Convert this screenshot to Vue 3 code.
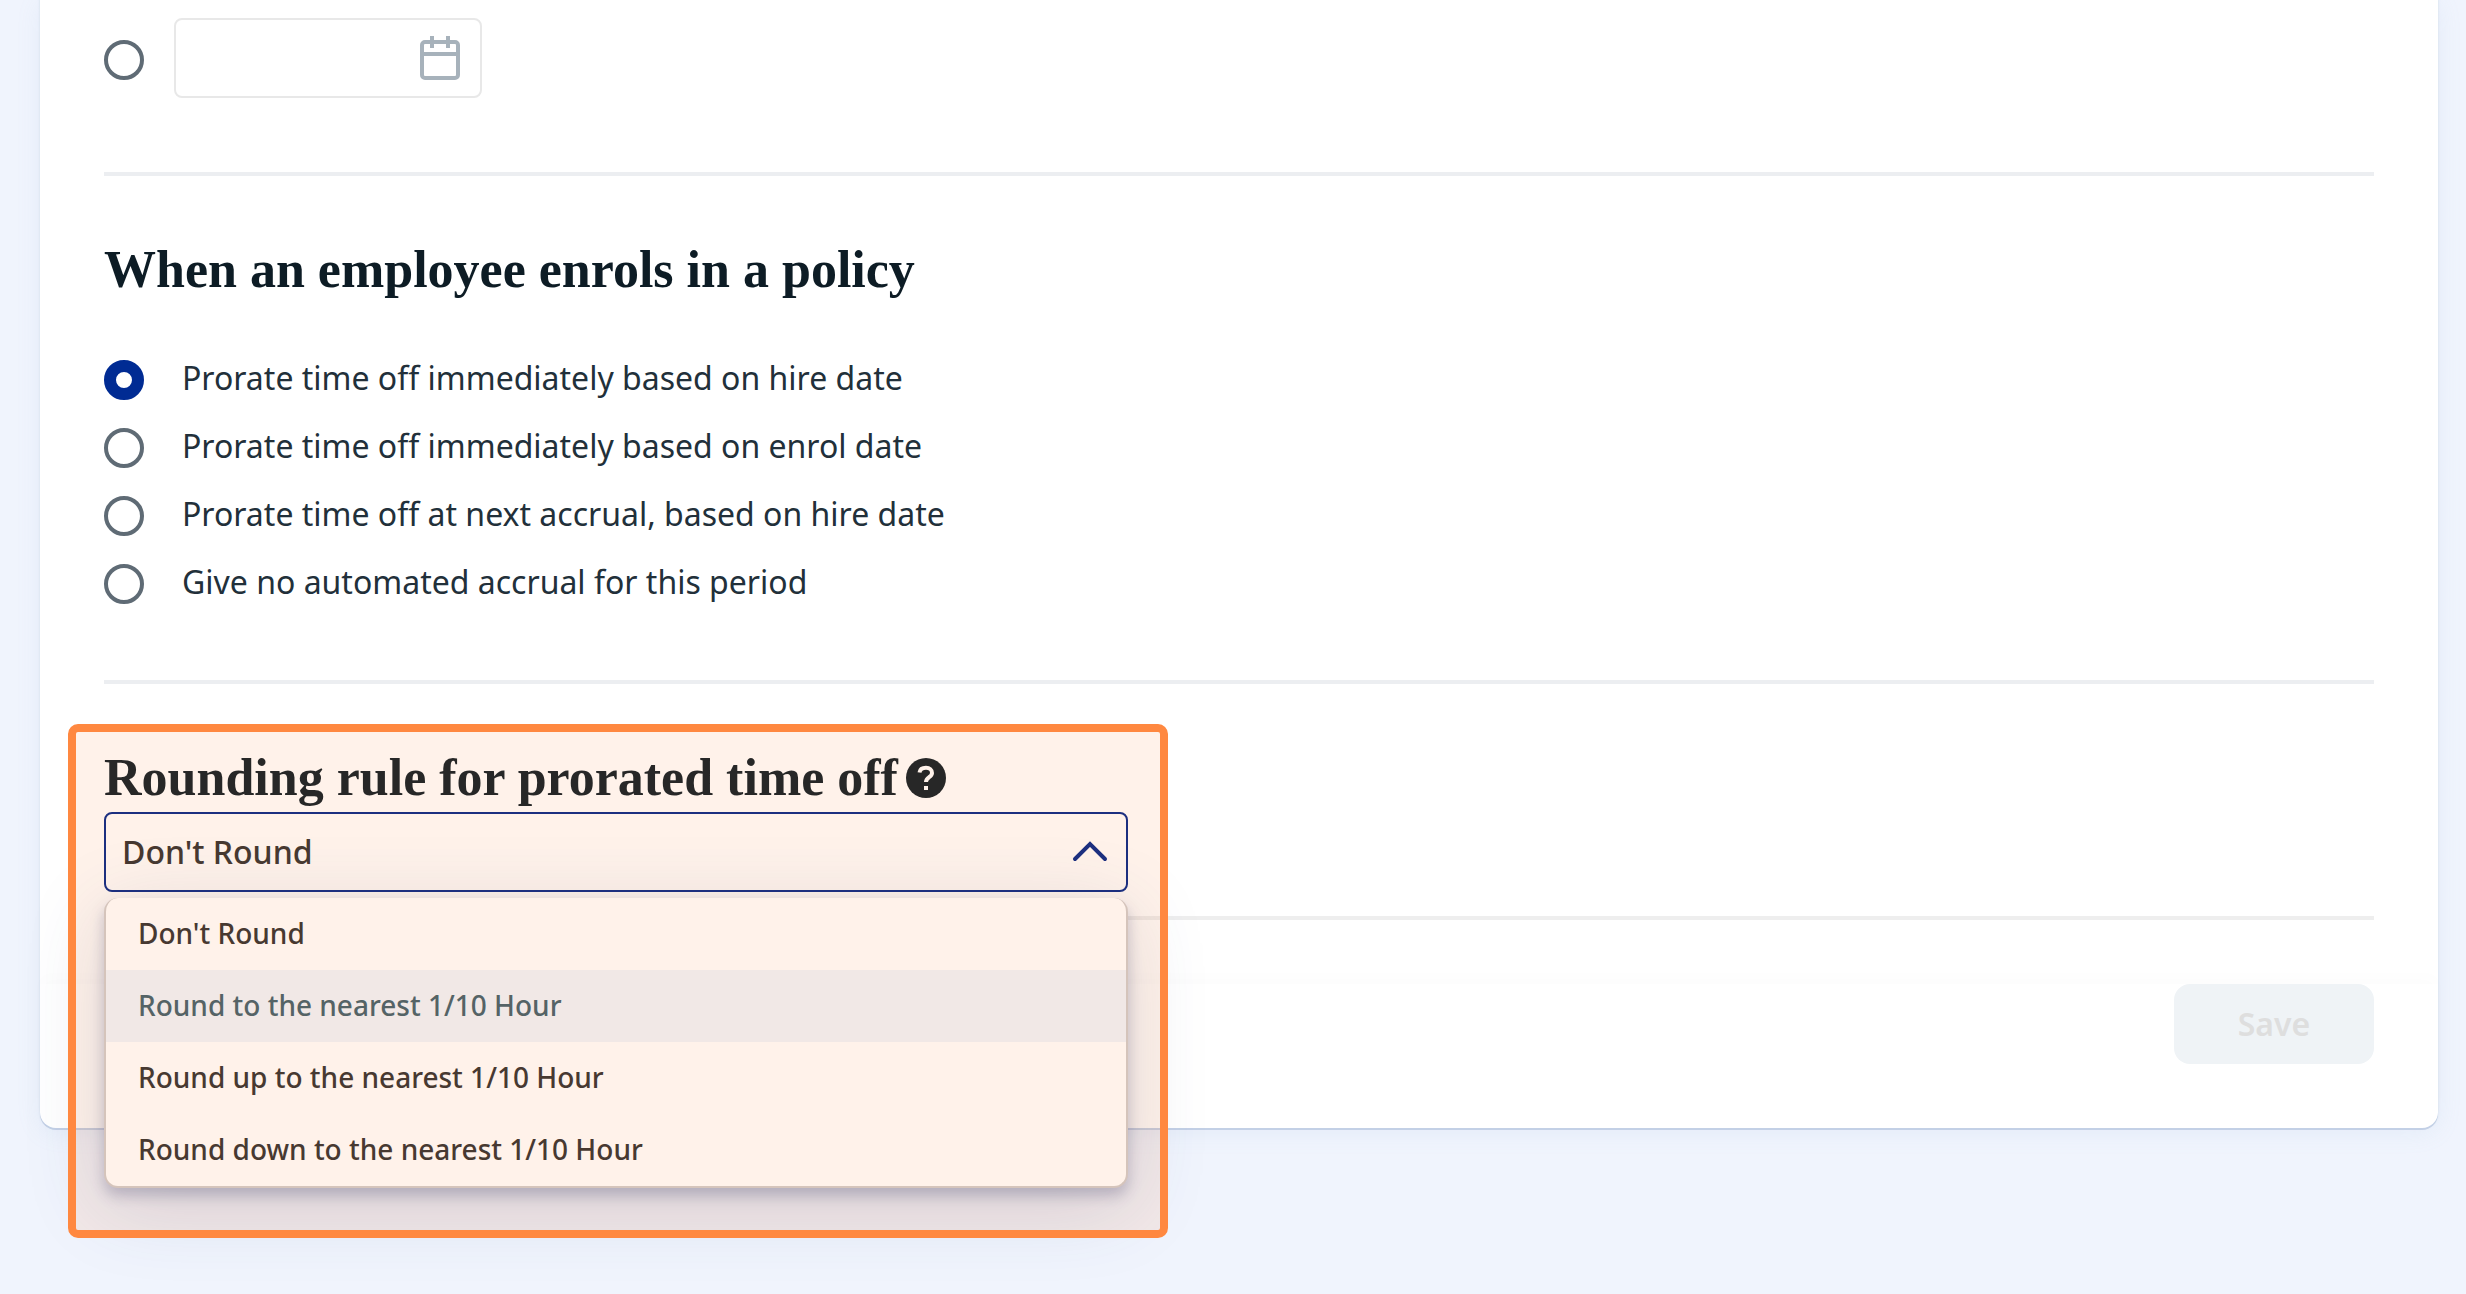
<script setup>
import { ref } from 'vue'

const startOption = ref('')
const startDate = ref('')

const enrolOptions = [
  'Prorate time off immediately based on hire date',
  'Prorate time off immediately based on enrol date',
  'Prorate time off at next accrual, based on hire date',
  'Give no automated accrual for this period',
]
const enrolChoice = ref(enrolOptions[0])

const roundingOptions = [
  "Don't Round",
  'Round to the nearest 1/10 Hour',
  'Round up to the nearest 1/10 Hour',
  'Round down to the nearest 1/10 Hour',
]
const rounding = ref(roundingOptions[0])
const activeOption = ref(1)
</script>

<template>
  <main class="page">
    <form class="card" @submit.prevent>
      <div class="body">
        <div class="date-row">
          <input v-model="startOption" type="radio" class="radio" name="start" value="date" aria-label="Start on a specific date" />
          <div class="date-field">
            <input v-model="startDate" type="text" class="date-input" aria-label="Start date" />
            <svg class="calendar" viewBox="0 0 40 44" aria-hidden="true">
              <rect x="2" y="6" width="36" height="36" rx="3" />
              <path d="M2 18H38M12 0V12M28 0V12" />
            </svg>
          </div>
        </div>

        <hr class="rule" />

        <section class="section">
          <h2 id="enrol-title" class="title">When an employee enrols in a policy</h2>
          <div class="choices" role="radiogroup" aria-labelledby="enrol-title">
            <label v-for="option in enrolOptions" :key="option" class="choice">
              <input v-model="enrolChoice" type="radio" class="radio" name="enrol" :value="option" />
              <span class="choice-text">{{ option }}</span>
            </label>
          </div>
        </section>

        <hr class="rule" />

        <section class="section rounding">
          <div class="title-row">
            <h2 class="title"><label for="rounding">Rounding rule for prorated time off</label></h2>
            <button type="button" class="help" aria-label="Help">
              <svg viewBox="0 0 40 40" aria-hidden="true">
                <circle cx="20" cy="20" r="20" fill="#0d1c25" />
                <path d="M13.500 14.500C14 11 16.500 9.800 20 9.800C23.700 9.800 26 11.800 26 15C26 19.300 20 19 20 24" fill="none" stroke="#fff" stroke-width="4" />
                <rect x="18" y="28" width="4" height="4" fill="#fff" />
              </svg>
            </button>
          </div>
          <div class="select-wrap">
            <select id="rounding" v-model="rounding" class="select">
              <option v-for="option in roundingOptions" :key="option">{{ option }}</option>
            </select>
            <svg class="chevron" viewBox="0 0 36 22" aria-hidden="true">
              <path d="M3 19L18 4L33 19" />
            </svg>
            <ul class="menu" role="listbox" aria-label="Rounding rule">
              <li
                v-for="(option, index) in roundingOptions"
                :key="option"
                class="menu-item"
                :class="{ active: index === activeOption }"
                role="option"
                :aria-selected="option === rounding"
                @mouseenter="activeOption = index"
                @click="rounding = option"
              >
                {{ option }}
              </li>
            </ul>
          </div>
          <div class="highlight"></div>
        </section>

        <hr class="rule pale" />
      </div>

      <footer class="footer">
        <button type="submit" class="save" disabled>Save</button>
      </footer>
    </form>
  </main>
</template>

<style>
body {
  background: #f0f4fd;
}
</style>

<style scoped>
.page {
  box-sizing: border-box;
  min-height: 100vh;
  padding: 0 28px 96px 40px;
  background: #f0f4fd;
  font-family: "Noto Sans", "Open Sans", sans-serif;
  font-size: 32px;
  color: #22303a;
}

.card {
  background: #fff;
  border-radius: 0 0 16px 16px;
  box-shadow: 0 2px 0 #c3d0e6, 0 0 2px 1px #dfe7f2, 0 4px 24px rgba(140, 180, 210, 0.12);
}

.body {
  padding: 18px 64px 64px;
}

.date-row {
  display: flex;
  align-items: center;
  gap: 30px;
  margin-bottom: 74px;
}

.date-row .radio {
  margin-top: 4px;
}

.radio {
  flex: none;
  box-sizing: border-box;
  width: 40px;
  height: 40px;
  margin: 0;
  appearance: none;
  border: 4px solid #5f6b75;
  border-radius: 50%;
  background: #fff;
}

.radio:checked {
  border: 12px solid #002b93;
}

.date-field {
  box-sizing: border-box;
  display: flex;
  align-items: center;
  width: 308px;
  height: 80px;
  padding: 0 20px;
  border: 2px solid #e8e8e8;
  border-radius: 8px;
}

.date-input {
  flex: 1;
  min-width: 0;
  border: 0;
  background: none;
  font: inherit;
  outline: none;
}

.calendar {
  flex: none;
  width: 40px;
  height: 44px;
  fill: none;
  stroke: #a7b2bb;
  stroke-width: 4;
}

.rule {
  height: 4px;
  margin: 0;
  border: 0;
  background: #eceef1;
}

.rule.pale {
  background: #eee;
}

.section {
  padding: 66px 0 76px;
}

.title {
  margin: 0;
  font-family: "Liberation Serif", serif;
  font-size: 52px;
  line-height: 56px;
  font-weight: 700;
  color: #0d1c25;
}

.choices {
  display: flex;
  flex-direction: column;
  gap: 28px;
  margin-top: 62px;
}

.choice {
  display: flex;
  align-items: flex-start;
  gap: 38px;
}

.choice-text {
  line-height: 36px;
  font-weight: 370;
}

.rounding {
  position: relative;
  z-index: 1;
  padding-bottom: 24px;
}

.title-row {
  display: flex;
  align-items: center;
  gap: 8px;
  margin-bottom: 6px;
}

.help {
  width: 40px;
  height: 40px;
  padding: 0;
  border: 0;
  background: none;
}

.help svg {
  display: block;
}

.select-wrap {
  position: relative;
  width: 1024px;
  max-width: 100%;
}

.select {
  display: block;
  box-sizing: border-box;
  width: 100%;
  height: 80px;
  padding: 0 16px 2px;
  appearance: none;
  border: 2px solid #002588;
  border-radius: 8px;
  background: #fff;
  font: inherit;
  font-weight: 500;
  color: #313030;
}

.chevron {
  position: absolute;
  top: 28px;
  right: 20px;
  width: 36px;
  height: 22px;
  fill: none;
  stroke: #002588;
  stroke-width: 4;
  stroke-linecap: round;
  pointer-events: none;
}

.menu {
  position: absolute;
  top: 86px;
  right: 0;
  left: 0;
  margin: 0;
  padding: 0;
  overflow: hidden;
  border: 2px solid #d0cccb;
  border-top: 0;
  border-radius: 14px;
  background: #fff;
  box-shadow: 0 8px 14px rgba(40, 50, 110, 0.26), 0 16px 80px rgba(60, 80, 120, 0.18);
  list-style: none;
}

.menu-item {
  padding: 0 32px 2px;
  font-size: 28px;
  line-height: 70px;
  font-weight: 500;
  color: #313030;
}

.menu-item.active {
  background: #f0f4fb;
  color: #415f6b;
}

.highlight {
  position: absolute;
  top: 40px;
  left: -36px;
  box-sizing: border-box;
  width: 1100px;
  height: 514px;
  border: 8px solid #ff8840;
  border-radius: 10px;
  background: rgba(255, 140, 64, 0.11);
  background-clip: padding-box;
  pointer-events: none;
}

.footer {
  display: flex;
  justify-content: flex-end;
  padding: 0 64px 64px;
  border-radius: 0 0 16px 16px;
  box-shadow: 0 -8px 16px rgba(0, 0, 0, 0.01);
}

.save {
  width: 200px;
  height: 80px;
  padding: 0 0 2px;
  border: 0;
  border-radius: 16px;
  background: #eff3f6;
  font: inherit;
  font-weight: 600;
  color: #dedede;
}
</style>
